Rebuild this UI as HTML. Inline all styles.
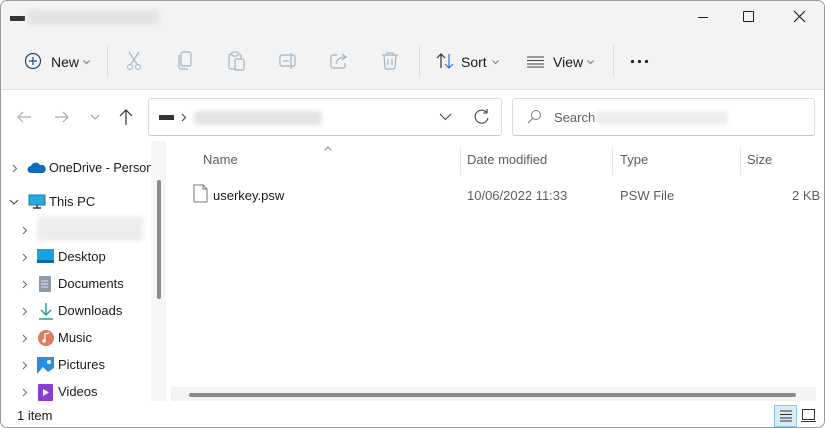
<!DOCTYPE html>
<html><head><meta charset="utf-8"><style>
*{margin:0;padding:0;box-sizing:border-box}
body{width:825px;height:428px;overflow:hidden;background:#fff;font-family:"Liberation Sans",sans-serif;color:#1a1a1a;position:relative}
.win{position:absolute;left:0;top:0;width:825px;height:428px;border:1px solid #9a9a9a;border-radius:7px;overflow:hidden;background:#fff}
.top{position:absolute;left:0;top:0;width:825px;height:89px;background:#f3f3f3;border-bottom:1px solid #e3e3e3}
.a{position:absolute;font-size:13px;white-space:nowrap}
.blur{position:absolute;background:#e4e4e4;border-radius:3px;filter:blur(2px)}
svg{position:absolute}
.box{position:absolute;border:1px solid #dcdcdc;border-bottom-color:#c8c8c8;background:#fff;border-radius:3px}
.g{color:#5d5d5d}
.ch{position:absolute;width:6px;height:9px}
</style></head><body><div class="win">
<div class="top"></div>
<div style="position:absolute;left:9px;top:15px;width:15px;height:5px;background:#333"></div>
<div class="blur" style="left:26px;top:9px;width:132px;height:15px"></div>
<div style="position:absolute;left:697px;top:16px;width:10px;height:1.3px;background:#222"></div>
<div style="position:absolute;left:742px;top:10px;width:11px;height:11px;border:1.3px solid #222;border-radius:1px"></div>
<svg style="left:792px;top:9px" width="13" height="13"><path d="M1 1L12 12M12 1L1 12" stroke="#222" stroke-width="1.2"/></svg>
<!-- toolbar -->
<svg style="left:23px;top:51px" width="18" height="18"><circle cx="9" cy="9" r="7.5" fill="none" stroke="#1f4a6e" stroke-width="1.2"/><path d="M9 5v8M5 9h8" stroke="#1f4a6e" stroke-width="1.2"/></svg>
<div class="a" style="left:50px;top:53px;font-size:14px">New</div>
<svg style="left:82px;top:59px" width="7" height="5"><path d="M0.5 0.5l3 3 3-3" fill="none" stroke="#777"/></svg>
<div style="position:absolute;left:106px;top:44px;width:1px;height:33px;background:#ddd"></div>
<svg style="left:125px;top:50px" width="16" height="20"><path d="M3 1l8 12M13 1L5 13" stroke="#9fb5c7" stroke-width="1.2" fill="none"/><circle cx="4" cy="16" r="2.5" fill="none" stroke="#9fb5c7"/><circle cx="12" cy="16" r="2.5" fill="none" stroke="#9fb5c7"/></svg>
<svg style="left:176px;top:50px" width="16" height="20"><rect x="4" y="1" width="10" height="14" rx="2" fill="none" stroke="#9fb5c7" stroke-width="1.2"/><path d="M2 4v12a2 2 0 0 0 2 2h7" fill="none" stroke="#9fb5c7" stroke-width="1.2"/></svg>
<svg style="left:227px;top:50px" width="18" height="20"><rect x="1" y="3" width="12" height="15" rx="2" fill="none" stroke="#9fb5c7" stroke-width="1.2"/><rect x="7" y="8" width="9" height="11" rx="1.5" fill="#f3f3f3" stroke="#9fb5c7" stroke-width="1.2"/><rect x="4" y="1" width="6" height="4" rx="1" fill="#f3f3f3" stroke="#9fb5c7"/></svg>
<svg style="left:278px;top:51px" width="18" height="18"><rect x="1" y="3" width="15" height="11" rx="2" fill="none" stroke="#9fb5c7" stroke-width="1.2"/><path d="M4 9h6M12 1v16" stroke="#9fb5c7" stroke-width="1.2"/></svg>
<svg style="left:329px;top:51px" width="18" height="18"><path d="M7 3H3a2 2 0 0 0-2 2v9a2 2 0 0 0 2 2h10a2 2 0 0 0 2-2v-3M6 12c1-5 4-7 9-7M12 2l4 3-4 3" fill="none" stroke="#9fb5c7" stroke-width="1.2"/></svg>
<svg style="left:380px;top:50px" width="18" height="20"><path d="M1 4h16M6 4V2h6v2M3 4l1 13a2 2 0 0 0 2 1h6a2 2 0 0 0 2-1l1-13M7 8v6M11 8v6" fill="none" stroke="#9fb5c7" stroke-width="1.2"/></svg>
<div style="position:absolute;left:418px;top:44px;width:1px;height:33px;background:#ddd"></div>
<svg style="left:435px;top:51px" width="18" height="18"><path d="M5 16V2M1 6l4-4 4 4" fill="none" stroke="#333" stroke-width="1.2"/><path d="M13 2v14M9 12l4 4 4-4" fill="none" stroke="#2b7bd1" stroke-width="1.2"/></svg>
<div class="a" style="left:460px;top:53px;font-size:14px">Sort</div>
<svg style="left:491px;top:59px" width="7" height="5"><path d="M0.5 0.5l3 3 3-3" fill="none" stroke="#777"/></svg>
<svg style="left:526px;top:55px" width="18" height="12"><path d="M0 1h17M0 4.5h17M0 8h17M0 11h17" stroke="#444" stroke-width="1"/></svg>
<div class="a" style="left:552px;top:53px;font-size:14px">View</div>
<svg style="left:586px;top:59px" width="7" height="5"><path d="M0.5 0.5l3 3 3-3" fill="none" stroke="#777"/></svg>
<div style="position:absolute;left:612px;top:44px;width:1px;height:33px;background:#ddd"></div>
<svg style="left:629px;top:58px" width="20" height="5"><circle cx="2.5" cy="2.5" r="1.6" fill="#222"/><circle cx="9.5" cy="2.5" r="1.6" fill="#222"/><circle cx="16.5" cy="2.5" r="1.6" fill="#222"/></svg>
<!-- nav row -->
<svg style="left:15px;top:108px" width="16" height="16"><path d="M15 8H2M7 3L2 8l5 5" fill="none" stroke="#aaa" stroke-width="1.2"/></svg>
<svg style="left:53px;top:108px" width="16" height="16"><path d="M1 8h13M9 3l5 5-5 5" fill="none" stroke="#aaa" stroke-width="1.2"/></svg>
<svg style="left:89px;top:112px" width="10" height="8"><path d="M1 2l4 4 4-4" fill="none" stroke="#999"/></svg>
<svg style="left:117px;top:107px" width="16" height="18"><path d="M8 17V2M2 8l6-6 6 6" fill="none" stroke="#333" stroke-width="1.2"/></svg>
<div class="box" style="left:147px;top:97px;width:354px;height:38px"></div>
<div style="position:absolute;left:158px;top:114px;width:15px;height:5px;background:#333"></div>
<svg style="left:180px;top:112px" width="6" height="9"><path d="M1 1l3.5 3.5L1 8" fill="none" stroke="#444" stroke-width="1.1"/></svg>
<div class="blur" style="left:193px;top:110px;width:128px;height:14px"></div>
<svg style="left:438px;top:112px" width="13" height="9"><path d="M1 1l5.5 5.5L12 1" fill="none" stroke="#444" stroke-width="1.1"/></svg>
<svg style="left:472px;top:107px" width="17" height="17"><path d="M14 5A6.5 6.5 0 1 0 15 10M14 1v4h-4" fill="none" stroke="#444" stroke-width="1.1"/></svg>
<div class="box" style="left:511px;top:97px;width:303px;height:38px"></div>
<svg style="left:526px;top:108px" width="15" height="15"><circle cx="9" cy="6" r="4.5" fill="none" stroke="#777"/><path d="M6 9l-5 5" stroke="#777"/></svg>
<div class="a g" style="left:553px;top:109px;font-size:13px">Search</div>
<div class="blur" style="left:595px;top:110px;width:132px;height:14px;background:#eee"></div>
<!-- nav pane -->
<svg class="ch" style="left:11px;top:163px"><path d="M1 1l3.5 3.5L1 8" fill="none" stroke="#666"/></svg>
<svg style="left:26px;top:160px" width="20" height="13"><path d="M4 12a3.5 3.5 0 0 1 0-7 5 5 0 0 1 9-1 4 4 0 0 1 3 8z" fill="#0f6cbd"/></svg>
<div class="a" style="left:48px;top:160px;font-size:12.6px">OneDrive - Person</div>
<svg style="left:8px;top:197px" width="10" height="8"><path d="M1 2l4 4 4-4" fill="none" stroke="#444"/></svg>
<svg style="left:27px;top:193px" width="18" height="16"><rect x="1" y="1" width="16" height="10" fill="#29a8d9" stroke="#1d7aa8"/><path d="M9 11v3M5 14h8" stroke="#333" stroke-width="1.4"/></svg>
<div class="a" style="left:48px;top:193px">This PC</div>
<svg class="ch" style="left:21px;top:225px"><path d="M1 1l3.5 3.5L1 8" fill="none" stroke="#666"/></svg>
<div class="blur" style="left:36px;top:216px;width:106px;height:24px;background:#ececec"></div>
<svg class="ch" style="left:21px;top:252px"><path d="M1 1l3.5 3.5L1 8" fill="none" stroke="#666"/></svg>
<svg style="left:36px;top:248px" width="17" height="15"><rect x="0" y="0" width="17" height="13" fill="#1aa3de"/><rect x="0" y="11" width="17" height="3" fill="#0d6aa8"/></svg>
<div class="a" style="left:57px;top:248px">Desktop</div>
<svg class="ch" style="left:21px;top:279px"><path d="M1 1l3.5 3.5L1 8" fill="none" stroke="#666"/></svg>
<svg style="left:37px;top:274px" width="14" height="18"><rect x="1" y="1" width="12" height="16" rx="1" fill="#8e9aa8"/><path d="M3 6h7M3 9h7M3 12h7" stroke="#dde" /></svg>
<div class="a" style="left:57px;top:275px">Documents</div>
<svg class="ch" style="left:21px;top:306px"><path d="M1 1l3.5 3.5L1 8" fill="none" stroke="#666"/></svg>
<svg style="left:37px;top:301px" width="16" height="18"><path d="M8 1v12M3 8l5 5 5-5M1 17h14" fill="none" stroke="#1aa39b" stroke-width="1.5"/></svg>
<div class="a" style="left:57px;top:302px">Downloads</div>
<svg class="ch" style="left:21px;top:333px"><path d="M1 1l3.5 3.5L1 8" fill="none" stroke="#666"/></svg>
<svg style="left:36px;top:328px" width="18" height="18"><circle cx="9" cy="9" r="8" fill="#e07a5f"/><path d="M8 12V5l4-1" stroke="#fff" stroke-width="1.4" fill="none"/><circle cx="7" cy="12" r="1.8" fill="#fff"/></svg>
<div class="a" style="left:57px;top:329px">Music</div>
<svg class="ch" style="left:21px;top:360px"><path d="M1 1l3.5 3.5L1 8" fill="none" stroke="#666"/></svg>
<svg style="left:36px;top:356px" width="17" height="17"><rect width="17" height="17" fill="#2a8de0"/><path d="M0 17l6-7 5 5 6-4v6z" fill="#fff"/><circle cx="12" cy="5" r="2" fill="#fff"/></svg>
<div class="a" style="left:57px;top:356px">Pictures</div>
<svg class="ch" style="left:21px;top:387px"><path d="M1 1l3.5 3.5L1 8" fill="none" stroke="#666"/></svg>
<svg style="left:37px;top:383px" width="15" height="17"><rect width="15" height="17" rx="1" fill="#8a3fd1"/><path d="M5 5v7l6-3.5z" fill="#fff"/></svg>
<div class="a" style="left:57px;top:383px">Videos</div>
<div style="position:absolute;left:150px;top:140px;width:15px;height:260px;background:#f6f6f6"></div>
<div style="position:absolute;left:156px;top:179px;width:4px;height:119px;background:#8a8a8a;border-radius:2px"></div>
<!-- content -->
<svg style="left:323px;top:145px" width="8" height="5"><path d="M0.5 4.5l3.5-3.5 3.5 3.5" fill="none" stroke="#888"/></svg>
<div class="a g" style="left:202px;top:151px">Name</div>
<div style="position:absolute;left:459px;top:146px;width:1px;height:28px;background:#e8e8e8"></div>
<div class="a g" style="left:466px;top:151px">Date modified</div>
<div style="position:absolute;left:611px;top:146px;width:1px;height:28px;background:#e8e8e8"></div>
<div class="a g" style="left:619px;top:151px">Type</div>
<div style="position:absolute;left:739px;top:146px;width:1px;height:28px;background:#e8e8e8"></div>
<div class="a g" style="left:746px;top:151px">Size</div>
<svg style="left:192px;top:183px" width="15" height="19"><path d="M1 1h9l4 4v13H1z" fill="#fff" stroke="#777"/><path d="M10 1v4h4" fill="none" stroke="#777"/></svg>
<div class="a" style="left:212px;top:187px">userkey.psw</div>
<div class="a g" style="left:466px;top:187px">10/06/2022 11:33</div>
<div class="a g" style="left:619px;top:187px">PSW File</div>
<div class="a g" style="left:791px;top:187px">2 KB</div>
<div style="position:absolute;left:170px;top:386px;width:645px;height:14px;background:#f3f3f3"></div>
<div style="position:absolute;left:188px;top:392px;width:607px;height:4px;background:#8a8a8a;border-radius:2px"></div>
<div class="a" style="left:16px;top:407px;font-size:13px">1 item</div>
<div style="position:absolute;left:773px;top:404px;width:23px;height:22px;background:#d6ecf6;border:1px solid #8cc6e2"></div>
<svg style="left:779px;top:409px" width="12" height="12"><path d="M0 1h12M0 4.5h12M0 8h12M0 11h12" stroke="#333"/></svg>
<svg style="left:800px;top:407px" width="15" height="15"><rect x="1.5" y="1.5" width="12" height="10" fill="none" stroke="#333"/><path d="M0 13.5h15" stroke="#333"/></svg>
</div></body></html>
